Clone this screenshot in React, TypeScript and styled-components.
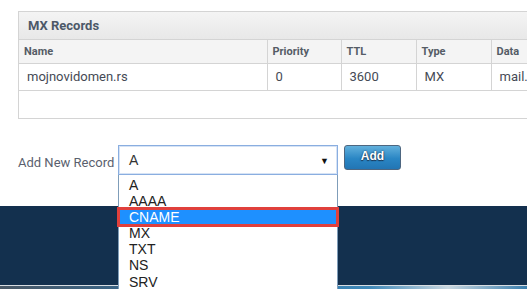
import React from "react";
import styled, { createGlobalStyle } from "styled-components";

const Global = createGlobalStyle`
  html, body { margin: 0; padding: 0; background: #fff; overflow: hidden; }
  body { width: 527px; height: 289px; font-family: Roboto, "Liberation Sans", sans-serif; }
`;

const Page = styled.div`
  position: relative;
  width: 527px;
  height: 289px;
  overflow: hidden;
  padding-top: 11px;
  box-sizing: border-box;
`;

const Content = styled.div`
  padding-left: 18px;
`;

const Panel = styled.div`
  width: 580px;
  border: 1px solid #d4d4d4;
  box-sizing: border-box;
`;

const PanelHeader = styled.div`
  height: 27px;
  display: flex;
  align-items: center;
  padding-left: 9px;
  background: linear-gradient(#f4f4f4, #e8e8e8);
  font: bold 13px Roboto, sans-serif;
  color: #4c5868;
  border-bottom: 1px solid #d4d4d4;
`;

const Table = styled.table`
  border-collapse: collapse;
  width: 100%;
  table-layout: fixed;
`;

const Col = styled.col<{ $w?: number }>`
  width: ${(p) => (p.$w ? `${p.$w}px` : "auto")};
`;

const Th = styled.th`
  box-sizing: border-box;
  height: 23px;
  padding: 0 0 0 5px;
  text-align: left;
  background: #f4f4f4;
  font: bold 11px Roboto, sans-serif;
  color: #555c66;
  border-left: 1px solid #d4d4d4;
  border-bottom: 1px solid #d4d4d4;
  white-space: nowrap;
  overflow: hidden;
  &:first-child { border-left: none; }
`;

const Td = styled.td`
  box-sizing: border-box;
  height: 27px;
  padding: 0 0 0 8px;
  font: 13px Roboto, sans-serif;
  color: #454a55;
  border-left: 1px solid #d4d4d4;
  border-bottom: 1px solid #d4d4d4;
  white-space: nowrap;
  overflow: hidden;
  &:first-child { border-left: none; }
`;

const EmptyRow = styled.td`
  height: 27px;
  padding: 0;
`;

const FormRow = styled.div`
  margin-top: 26px;
  display: flex;
  align-items: flex-start;
  height: 30px;
`;

const Label = styled.span`
  font: 13px Roboto, sans-serif;
  color: #5a5f6e;
  line-height: 30px;
  padding-top: 3px;
  width: 100px;
`;

const SelectWrap = styled.div`
  position: relative;
  width: 220px;
  height: 30px;
`;

const SelectBox = styled.div`
  box-sizing: border-box;
  width: 220px;
  height: 30px;
  border: 1px solid #8aaee0;
  box-shadow: inset 0 0 0 1px #d6e3f5;
  background: #fff;
  display: flex;
  align-items: center;
  padding: 0 8px 0 10px;
  font: 14px "Liberation Sans", Arial, sans-serif;
  color: #333;
`;

const SelectValue = styled.span`
  flex: 1;
  padding-top: 1px;
`;

const Arrow = styled.span`
  font-size: 9px;
  color: #111;
  padding-top: 2px;
`;

const List = styled.ul`
  position: absolute;
  z-index: 2;
  top: 30px;
  left: 0;
  width: 220px;
  height: 140px;
  box-sizing: border-box;
  margin: 0;
  padding: 2px 0 0;
  list-style: none;
  background: #fff;
  border: 1px solid #7f9db9;
  border-top: none;
`;

const Item = styled.li<{ $active?: boolean }>`
  height: 16.2px;
  padding-left: 10px;
  font: 14px/16px "Liberation Sans", Arial, sans-serif;
  color: ${(p) => (p.$active ? "#fff" : "#222")};
  background: ${(p) => (p.$active ? "#1e90ff" : "transparent")};
  outline: ${(p) => (p.$active ? "3px solid #e0403c" : "none")};
  outline-offset: -1px;
  position: relative;
`;

const AddButton = styled.button`
  margin-left: 6px;
  width: 57px;
  height: 25px;
  border: 1px solid #4d6680;
  border-radius: 3px;
  background: linear-gradient(#62b0dc, #2a86c4 55%, #2275b4);
  color: #fff;
  font: bold 12px "Liberation Sans", Arial, sans-serif;
  text-shadow: 0 0 2px #1c3550, 0 1px 1px #1c3550;
  padding: 0 0 2px;
  cursor: pointer;
`;

const Band = styled.div`
  margin-top: 31px;
  height: 79px;
  background: #13304e;
  border-bottom: 1px solid #d8dde2;
`;

const Strip = styled.div`
  height: 3px;
  background: linear-gradient(90deg, #4a5866, #2e6e9e 40%, #3f88b8 70%, #c9d7e0 85%, #3b7fae);
`;

const options = ["A", "AAAA", "CNAME", "MX", "TXT", "NS", "SRV"];

export default function App() {
  return (
    <Page>
      <Global />
      <Content>
        <Panel>
          <PanelHeader>MX Records</PanelHeader>
          <Table>
            <colgroup>
              <Col $w={248} />
              <Col $w={74} />
              <Col $w={75} />
              <Col $w={75} />
              <Col />
            </colgroup>
            <thead>
              <tr>
                <Th>Name</Th>
                <Th>Priority</Th>
                <Th>TTL</Th>
                <Th>Type</Th>
                <Th>Data</Th>
              </tr>
            </thead>
            <tbody>
              <tr>
                <Td>mojnovidomen.rs</Td>
                <Td>0</Td>
                <Td>3600</Td>
                <Td>MX</Td>
                <Td>mail.mojnovidomen.rs</Td>
              </tr>
              <tr>
                <EmptyRow colSpan={5} />
              </tr>
            </tbody>
          </Table>
        </Panel>
        <FormRow>
          <Label>Add New Record</Label>
          <SelectWrap>
            <SelectBox>
              <SelectValue>A</SelectValue>
              <Arrow>▼</Arrow>
            </SelectBox>
            <List>
              {options.map((o) => (
                <Item key={o} $active={o === "CNAME"}>
                  {o}
                </Item>
              ))}
            </List>
          </SelectWrap>
          <AddButton>Add</AddButton>
        </FormRow>
      </Content>
      <Band />
      <Strip />
    </Page>
  );
}
